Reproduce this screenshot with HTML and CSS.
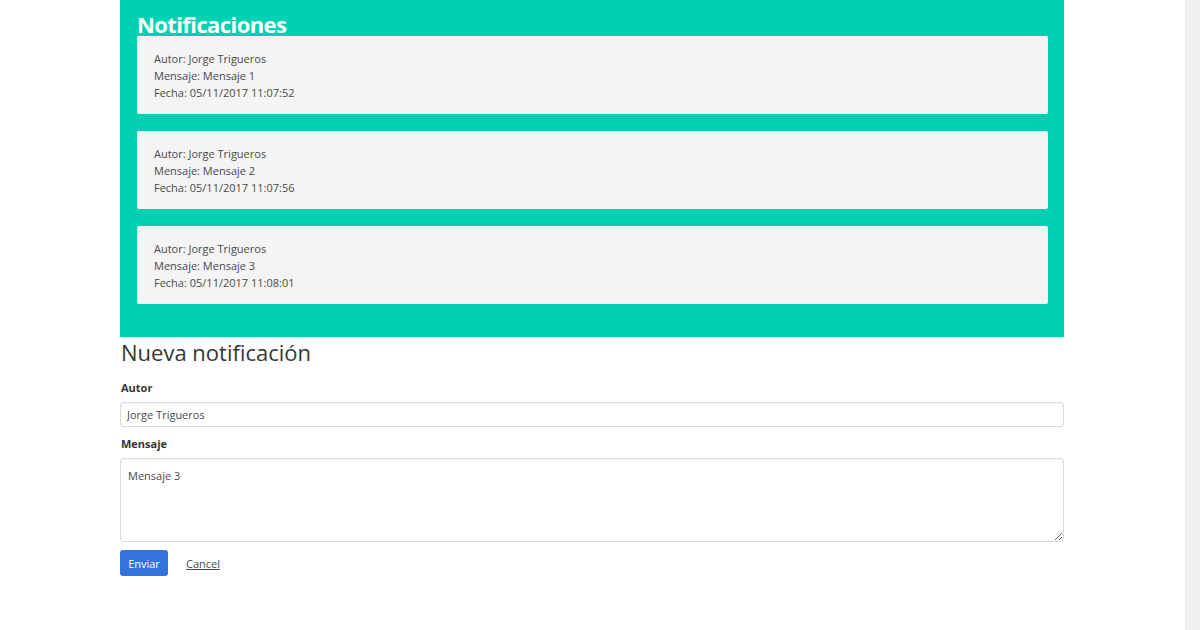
FILE: index.html
```html
<!DOCTYPE html>
<html lang="es">
<head>
<meta charset="utf-8">
<title>Notificaciones</title>
<link rel="stylesheet" href="styles.css">
</head>
<body>
<div class="page">
  <main class="main">
    <div class="container">
      <section class="panel">
        <h1 class="panel-title">Notificaciones</h1>
        <div class="cards">
          <div class="card">
            <div>Autor: Jorge Trigueros</div>
            <div>Mensaje: Mensaje 1</div>
            <div>Fecha: 05/11/2017 11:07:52</div>
          </div>
          <div class="card">
            <div>Autor: Jorge Trigueros</div>
            <div>Mensaje: Mensaje 2</div>
            <div>Fecha: 05/11/2017 11:07:56</div>
          </div>
          <div class="card">
            <div>Autor: Jorge Trigueros</div>
            <div>Mensaje: Mensaje 3</div>
            <div>Fecha: 05/11/2017 11:08:01</div>
          </div>
        </div>
      </section>
      <form class="form">
        <h2 class="form-title">Nueva notificación</h2>
        <label class="label label-first">Autor</label>
        <input class="input" type="text" value="Jorge Trigueros">
        <label class="label">Mensaje</label>
        <textarea class="textarea">Mensaje 3</textarea>
        <div class="actions">
          <button class="button" type="button">Enviar</button>
          <a class="cancel" href="#">Cancel</a>
        </div>
      </form>
    </div>
  </main>
  <div class="scrollbar"></div>
</div>
</body>
</html>
```
FILE: styles.css
```css
* { box-sizing: border-box; }
html, body { margin: 0; padding: 0; }
body {
  font-family: "Open Sans", "Noto Sans", sans-serif;
  color: #4a4a4a;
  background: #fff;
}
.page {
  display: grid;
  grid-template-columns: 1fr 15px;
  height: 630px;
  overflow: hidden;
}
.main { min-width: 0; }
.scrollbar {
  background: #f0f0f0;
  border-left: 1px solid #e8e8e8;
}
.container {
  width: 944px;
  margin-left: 120px;
}
.panel {
  background: #00d1b2;
  padding: 12px 16px 33px 17px;
}
.panel-title {
  margin: 0;
  font-size: 22px;
  line-height: 24px;
  font-weight: 700;
  color: #fff;
  letter-spacing: -0.6px;
}
.cards {
  display: flex;
  flex-direction: column;
  gap: 17px;
}
.card {
  background: #f4f4f4;
  border-radius: 2px;
  padding: 14px 17px 13px;
  font-size: 11px;
  line-height: 17px;
  color: #4a4a4a;
  height: 78px;
}
.form {
  display: flex;
  flex-direction: column;
  align-items: stretch;
}
.form-title {
  margin: 0;
  font-size: 22px;
  line-height: 30px;
  font-weight: 400;
  color: #363636;
  padding-left: 1px;
}
.label {
  display: block;
  font-size: 11px;
  line-height: 16px;
  font-weight: 700;
  color: #363636;
  margin: 9px 0 6px 1px;
}
.label-first { margin-top: 13px; }
.input, .textarea {
  font-family: inherit;
  font-size: 11px;
  color: #4a4a4a;
  border: 1px solid #dbdbdb;
  border-radius: 3px;
  background: #fff;
  box-shadow: inset 0 1px 2px rgba(10,10,10,0.06);
  width: 100%;
  margin: 0;
}
.input {
  height: 25px;
  padding: 0 6px;
}
.textarea {
  height: 84px;
  padding: 9px 7px;
  line-height: 16px;
  resize: vertical;
}
.actions {
  display: flex;
  align-items: center;
  gap: 18px;
  margin-top: 8px;
}
.button {
  font-family: inherit;
  font-size: 11px;
  height: 26px;
  width: 48px;
  padding: 0;
  border: none;
  border-radius: 3px;
  background: #3273dc;
  color: #fff;
}
.cancel {
  font-size: 11px;
  color: #4a4a4a;
  text-decoration: underline;
}
```
